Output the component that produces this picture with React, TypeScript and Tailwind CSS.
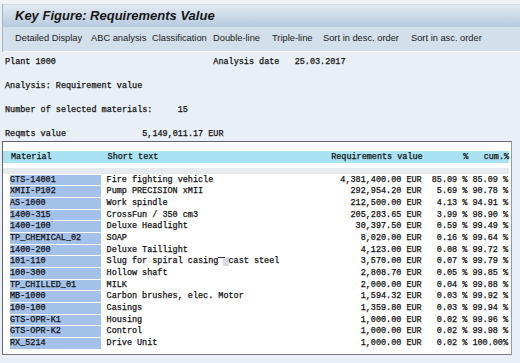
const mono = { fontFamily: '"Liberation Mono", "Courier New", monospace' };

type Row = { mat: string; text: string; amt: string; pct: string; cum: string };

const rows: Row[] = [
  { mat: "GTS-14001", text: "Fire fighting vehicle", amt: "4,381,400.00", pct: "85.09", cum: "85.09" },
  { mat: "XMII-P102", text: "Pump PRECISION xMII", amt: "292,954.20", pct: "5.69", cum: "90.78" },
  { mat: "AS-1000", text: "Work spindle", amt: "212,500.00", pct: "4.13", cum: "94.91" },
  { mat: "1400-315", text: "CrossFun / 350 cm3", amt: "205,283.65", pct: "3.99", cum: "98.90" },
  { mat: "1400-100", text: "Deluxe Headlight", amt: "30,397.50", pct: "0.59", cum: "99.49" },
  { mat: "TP_CHEMICAL_02", text: "SOAP", amt: "8,020.00", pct: "0.16", cum: "99.64" },
  { mat: "1400-200", text: "Deluxe Taillight", amt: "4,123.00", pct: "0.08", cum: "99.72" },
  { mat: "101-110", text: "SPECIAL", amt: "3,570.00", pct: "0.07", cum: "99.79" },
  { mat: "100-300", text: "Hollow shaft", amt: "2,808.70", pct: "0.05", cum: "99.85" },
  { mat: "TP_CHILLED_01", text: "MILK", amt: "2,000.00", pct: "0.04", cum: "99.88" },
  { mat: "MB-1000", text: "Carbon brushes, elec. Motor", amt: "1,594.32", pct: "0.03", cum: "99.92" },
  { mat: "100-100", text: "Casings", amt: "1,359.80", pct: "0.03", cum: "99.94" },
  { mat: "GTS-OPR-K1", text: "Housing", amt: "1,000.00", pct: "0.02", cum: "99.96" },
  { mat: "GTS-OPR-K2", text: "Control", amt: "1,000.00", pct: "0.02", cum: "99.98" },
  { mat: "RX_5214", text: "Drive Unit", amt: "1,000.00", pct: "0.02", cum: "100.00" },
];

const tools = [
  { label: "Detailed Display", w: "w-[76px]" },
  { label: "ABC analysis", w: "w-[61px]" },
  { label: "Classification", w: "w-[61px]" },
  { label: "Double-line", w: "w-[59px]" },
  { label: "Triple-line", w: "w-[51px]" },
  { label: "Sort in desc. order", w: "w-[88px]" },
  { label: "Sort in asc. order", w: "w-[80px]" },
];

const tail = (r: Row) => {
  const cum = r.cum === "100.00" ? "100.00%" : r.cum.padStart(5) + " %";
  return r.amt.padStart(12) + " EUR  " + r.pct.padStart(5) + " % " + cum;
};

const ListRow = ({ r }: { r: Row }) => (
  <div className="flex h-[11.7px] items-stretch whitespace-pre leading-[11.7px]">
    <div className="w-[18ch] shrink-0 border-t border-white bg-[#a4c1ea]">{r.mat}</div>
    <div className="w-[1ch] shrink-0 border-t border-white" />
    <div className="flex shrink-0 border-t border-white">
      {r.text === "SPECIAL" ? (
        <>
          <span className="shrink-0">Slug for spiral casing</span>
          <span className="relative w-[1ch] shrink-0">
            <span className="absolute left-0 right-[-2px] top-[1px] h-[1px] bg-[#333]" />
          </span>
          <span className="my-[1px] w-[1ch] shrink-0 bg-[#d3dce8]" />
          <span className="w-[22ch] shrink-0">cast steel</span>
        </>
      ) : (
        <span className="w-[46ch] shrink-0">{r.text}</span>
      )}
      <span className="shrink-0">{tail(r)}</span>
    </div>
  </div>
);

export default function App() {
  return (
    <div className="h-[363px] w-[520px] overflow-hidden bg-[#e9eff6] text-[#111]">
      <div className="h-[4px] bg-[#eef3f8]" />
      <div className="ml-[2px] border-l border-[#a5b4c4]">
        <div className="flex h-[23px] items-center border-t border-[#cfd9e4] bg-gradient-to-b from-[#e2e9f1] to-[#b6cadf] pl-[12px]">
          <span
            className="text-[13px] font-bold italic text-[#161616]"
            style={{ fontFamily: '"Liberation Sans", Arial, sans-serif' }}
          >
            Key Figure: Requirements Value
          </span>
        </div>
        <div
          className="flex h-[25px] items-center border-b border-[#f4f7fa] bg-[#d3dfea] pl-[12px] text-[9.3px] text-[#1a1a1a]"
          style={{ fontFamily: '"Liberation Sans", Tahoma, sans-serif' }}
        >
          {tools.map((t) => (
            <span key={t.label} className={t.w}>
              {t.label}
            </span>
          ))}
        </div>
      </div>

      <div className="pt-[4px] text-[8.47px] [-webkit-text-stroke:0.25px_#111]" style={mono}>
        <div className="whitespace-pre pl-[5px] leading-[12px]">
          <div>{"Plant 1000".padEnd(41) + "Analysis date   25.03.2017"}</div>
          <div>&nbsp;</div>
          <div>Analysis: Requirement value</div>
          <div>&nbsp;</div>
          <div>{"Number of selected materials:     15"}</div>
          <div>&nbsp;</div>
          <div>{"Reqmts value".padEnd(27) + "5,149,011.17 EUR"}</div>
        </div>

        <div className="ml-[2px] mt-[0.5px] h-[214px] w-[510px] border border-[#666] border-r-[#9a9a9a] border-b-[#7a7a7a] bg-white">
          <div className="h-[9px]" />
          <div className="mr-[2px] h-[12px] whitespace-pre bg-[#a9e2f2] pl-[8px] leading-[12px]">
            {"Material".padEnd(19) + "Short text".padEnd(44) + "Requirements value" + "        %" + "   cum.%"}
          </div>
          <div className="h-[5px]" />
          <div className="mr-[2px] h-[6px] bg-[#e6eaef]" />
          <div className="pl-[7px]">
            {rows.map((r) => (
              <ListRow key={r.mat} r={r} />
            ))}
          </div>
        </div>
      </div>
    </div>
  );
}
